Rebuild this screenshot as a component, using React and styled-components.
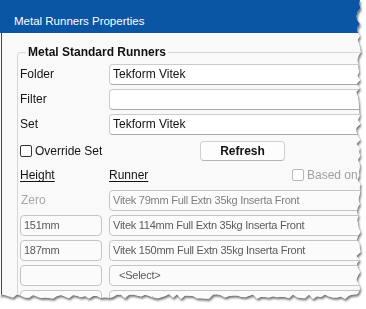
import React from 'react';
import styled, { createGlobalStyle } from 'styled-components';

const GlobalStyle = createGlobalStyle`
  html, body {
    margin: 0;
    padding: 0;
    background: #ffffff;
  }
  body {
    font-family: "Liberation Sans", Arial, sans-serif;
    color: #1a1a1a;
  }
`;

// jagged "torn paper" outline for the right and bottom edges
function tornClip() {
  let seed = 11;
  const rnd = () => {
    seed = (seed * 9301 + 49297) % 233280;
    return seed / 233280;
  };
  const pts = ['0px 0px', '360px 0px'];
  for (let y = 4; y < 296; y += 4) pts.push(`${(356 + rnd() * 5).toFixed(1)}px ${y}px`);
  for (let x = 357; x > 0; x -= 4) pts.push(`${x}px ${(294 + rnd() * 5).toFixed(1)}px`);
  pts.push('0px 297px');
  return `polygon(${pts.join(', ')})`;
}

const Page = styled.div`
  width: 366px;
  height: 309px;
  overflow: hidden;
  background: #ffffff;
`;

const Torn = styled.div`
  filter: drop-shadow(1px 2px 1px rgba(0, 0, 0, 0.55));
`;

const Window = styled.div`
  width: 366px;
  height: 309px;
  background: #f9f9f9;
  display: flex;
  flex-direction: column;
  clip-path: ${({ $clip }) => $clip};
`;

const TitleBar = styled.div`
  height: 33px;
  box-sizing: border-box;
  flex-shrink: 0;
  background: #0a55a4;
  color: #ffffff;
  font-size: 11.5px;
  line-height: 14px;
  padding: 14px 0 0 14px;
`;

const Body = styled.div`
  flex: 1;
  overflow: hidden;
  border-left: 1px solid #2d4d78;
  margin-left: 1px;
  padding-left: 15px;
`;

const Group = styled.fieldset`
  width: 390px;
  margin: 12px 0 0;
  padding: 0 0 0 2px;
  border: 1px solid #d6d6d6;
  border-radius: 4px;
  box-sizing: border-box;
`;

const Legend = styled.legend`
  margin-left: 6px;
  padding: 0 2px;
  font-size: 12px;
  line-height: 15px;
  font-weight: 700;
  color: #111111;
`;

const FieldGrid = styled.div`
  display: grid;
  grid-template-columns: 82px 1fr;
  column-gap: 7px;
  row-gap: 4px;
  margin-top: ${({ $top }) => $top}px;
`;

const Label = styled.div`
  font-size: 12px;
  line-height: 21px;
  height: 21px;
  color: ${({ $muted }) => ($muted ? '#a8a8a8' : '#141414')};
  padding-left: ${({ $muted }) => ($muted ? '1px' : '0')};
`;

const TextBox = styled.div`
  height: 21px;
  box-sizing: border-box;
  border: 1px solid #cbcbcb;
  border-bottom-color: #a9a9a9;
  border-radius: 4px;
  background: #ffffff;
  padding-left: 3px;
  font-size: 12px;
  line-height: 19px;
  color: #111111;
  white-space: nowrap;
  overflow: hidden;
`;

const ListBox = styled.div`
  height: 21px;
  box-sizing: border-box;
  border: 1px solid #c4c4c4;
  border-radius: 4px;
  background: #fbfbfb;
  padding-left: ${({ $select }) => ($select ? '9px' : '3px')};
  font-size: 11px;
  letter-spacing: -0.25px;
  line-height: 19px;
  color: ${({ $faint }) => ($faint ? '#7e7e7e' : '#5a5a5a')};
  white-space: nowrap;
  overflow: hidden;
`;

const OptionsRow = styled.div`
  display: flex;
  align-items: center;
  height: 20px;
  margin-top: 6px;
`;

const CheckLabel = styled.label`
  display: flex;
  align-items: center;
  gap: 3px;
  width: ${({ $width }) => ($width ? `${$width}px` : 'auto')};
  font-size: 12px;
  color: ${({ $disabled }) => ($disabled ? '#a0a0a0' : '#141414')};
  white-space: nowrap;
`;

const Box = styled.span`
  width: 10px;
  height: 10px;
  border: 1px solid ${({ $disabled }) => ($disabled ? '#b8b8b8' : '#333333')};
  border-radius: 2px;
  background: #ffffff;
  flex-shrink: 0;
`;

const Button = styled.div`
  width: 85px;
  height: 20px;
  box-sizing: border-box;
  border: 1px solid #d0d0d0;
  border-bottom-color: #b5b5b5;
  border-radius: 4px;
  background: #fdfdfd;
  font-size: 12px;
  font-weight: 700;
  line-height: 18px;
  text-align: center;
  color: #111111;
`;

const HeaderRow = styled.div`
  display: grid;
  grid-template-columns: 82px 176px auto;
  column-gap: 7px;
  align-items: center;
  height: 18px;
  margin-top: 5px;
`;

const ColumnTitle = styled.span`
  font-size: 12px;
  color: #141414;
  text-decoration: underline;
  text-underline-offset: 2px;
`;

const runners = [
  { height: 'Zero', runner: 'Vitek 79mm Full Extn 35kg Inserta Front', zero: true },
  { height: '151mm', runner: 'Vitek 114mm Full Extn 35kg Inserta Front' },
  { height: '187mm', runner: 'Vitek 150mm Full Extn 35kg Inserta Front' },
  { height: '', runner: '<Select>', select: true },
  { height: '', runner: '<Select>', select: true },
];

export default function App() {
  const clip = React.useMemo(tornClip, []);
  return (
    <Page>
      <GlobalStyle />
      <Torn>
        <Window $clip={clip}>
          <TitleBar>Metal Runners Properties</TitleBar>
          <Body>
            <Group>
              <Legend>Metal Standard Runners</Legend>

              <FieldGrid $top={4}>
                <Label>Folder</Label>
                <TextBox>Tekform Vitek</TextBox>
                <Label>Filter</Label>
                <TextBox />
                <Label>Set</Label>
                <TextBox>Tekform Vitek</TextBox>
              </FieldGrid>

              <OptionsRow>
                <CheckLabel $width={180}>
                  <Box />
                  Override Set
                </CheckLabel>
                <Button>Refresh</Button>
              </OptionsRow>

              <HeaderRow>
                <ColumnTitle>Height</ColumnTitle>
                <ColumnTitle>Runner</ColumnTitle>
                <CheckLabel $disabled>
                  <Box $disabled />
                  Based on
                </CheckLabel>
              </HeaderRow>

              <FieldGrid $top={6}>
                {runners.map((r, i) => (
                  <React.Fragment key={i}>
                    {r.zero ? <Label $muted>{r.height}</Label> : <ListBox>{r.height}</ListBox>}
                    <ListBox $select={r.select} $faint={r.zero}>{r.runner}</ListBox>
                  </React.Fragment>
                ))}
              </FieldGrid>
            </Group>
          </Body>
        </Window>
      </Torn>
    </Page>
  );
}
